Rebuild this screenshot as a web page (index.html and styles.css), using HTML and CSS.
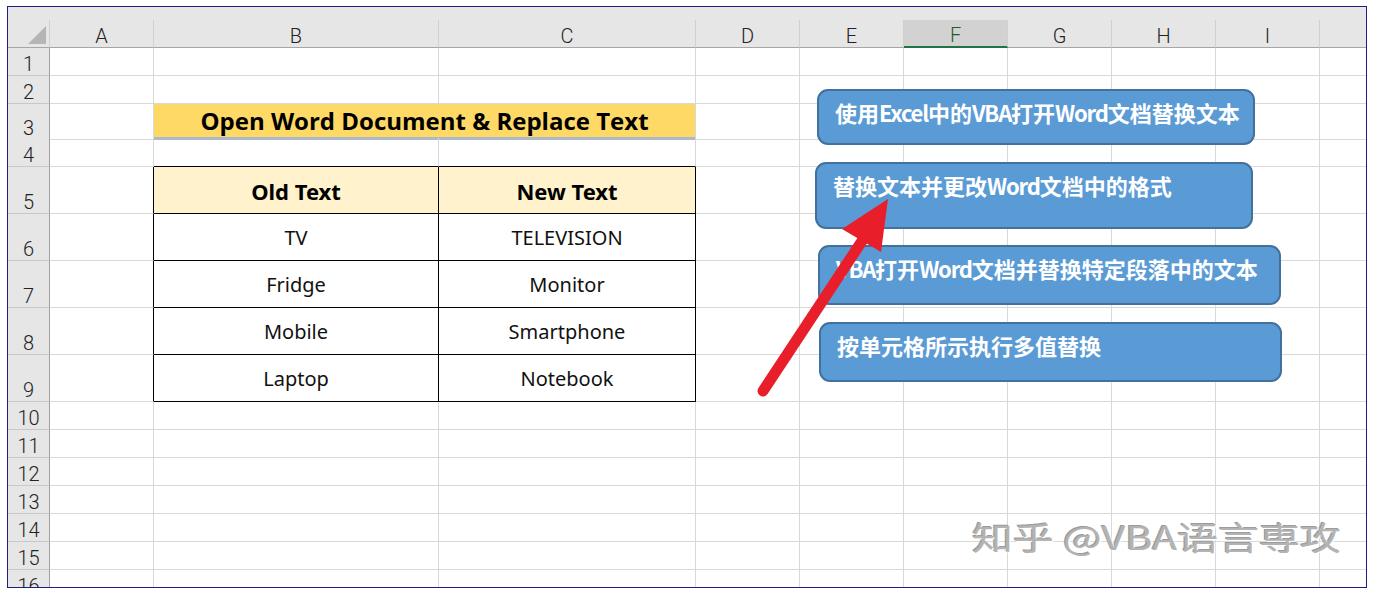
FILE: index.html
```html
<!DOCTYPE html>
<html lang="zh-CN">
<head>
<meta charset="utf-8">
<title>Open Word Document &amp; Replace Text</title>
<link rel="stylesheet" href="styles.css">
</head>
<body>
<div class="frame">
  <div class="row colhead">
    <div class="corner"><svg width="18" height="18" viewBox="0 0 18 18"><polygon points="18,0 18,18 0,18" fill="#b5b5b5"/></svg></div>
    <div>A</div><div>B</div><div>C</div><div>D</div><div>E</div><div class="sel">F</div><div>G</div><div>H</div><div>I</div><div></div>
  </div>
  <div class="row r28"><div class="rh">1</div><div class="c"></div><div class="c"></div><div class="c"></div><div class="c"></div><div class="c"></div><div class="c"></div><div class="c"></div><div class="c"></div><div class="c"></div><div class="c"></div></div>
  <div class="row r28"><div class="rh">2</div><div class="c"></div><div class="c"></div><div class="c"></div><div class="c"></div><div class="c"></div><div class="c"></div><div class="c"></div><div class="c"></div><div class="c"></div><div class="c"></div></div>
  <div class="row r34"><div class="rh">3</div><div class="c"></div><div class="c title">Open Word Document &amp; Replace Text</div><div class="c"></div><div class="c"></div><div class="c"></div><div class="c"></div><div class="c"></div><div class="c"></div><div class="c"></div></div>
  <div class="row r29"><div class="rh">4</div><div class="c"></div><div class="c tt"></div><div class="c tt"></div><div class="c"></div><div class="c"></div><div class="c"></div><div class="c"></div><div class="c"></div><div class="c"></div><div class="c"></div></div>
  <div class="row r47"><div class="rh">5</div><div class="c tl"></div><div class="c tb tbh">Old Text</div><div class="c tb tbh">New Text</div><div class="c"></div><div class="c"></div><div class="c"></div><div class="c"></div><div class="c"></div><div class="c"></div><div class="c"></div></div>
  <div class="row r47"><div class="rh">6</div><div class="c tl"></div><div class="c tb">TV</div><div class="c tb">TELEVISION</div><div class="c"></div><div class="c"></div><div class="c"></div><div class="c"></div><div class="c"></div><div class="c"></div><div class="c"></div></div>
  <div class="row r47"><div class="rh">7</div><div class="c tl"></div><div class="c tb">Fridge</div><div class="c tb">Monitor</div><div class="c"></div><div class="c"></div><div class="c"></div><div class="c"></div><div class="c"></div><div class="c"></div><div class="c"></div></div>
  <div class="row r47"><div class="rh">8</div><div class="c tl"></div><div class="c tb">Mobile</div><div class="c tb">Smartphone</div><div class="c"></div><div class="c"></div><div class="c"></div><div class="c"></div><div class="c"></div><div class="c"></div><div class="c"></div></div>
  <div class="row r47"><div class="rh">9</div><div class="c tl"></div><div class="c tb">Laptop</div><div class="c tb">Notebook</div><div class="c"></div><div class="c"></div><div class="c"></div><div class="c"></div><div class="c"></div><div class="c"></div><div class="c"></div></div>
  <div class="row r28"><div class="rh">10</div><div class="c"></div><div class="c"></div><div class="c"></div><div class="c"></div><div class="c"></div><div class="c"></div><div class="c"></div><div class="c"></div><div class="c"></div><div class="c"></div></div>
  <div class="row r28"><div class="rh">11</div><div class="c"></div><div class="c"></div><div class="c"></div><div class="c"></div><div class="c"></div><div class="c"></div><div class="c"></div><div class="c"></div><div class="c"></div><div class="c"></div></div>
  <div class="row r28"><div class="rh">12</div><div class="c"></div><div class="c"></div><div class="c"></div><div class="c"></div><div class="c"></div><div class="c"></div><div class="c"></div><div class="c"></div><div class="c"></div><div class="c"></div></div>
  <div class="row r28"><div class="rh">13</div><div class="c"></div><div class="c"></div><div class="c"></div><div class="c"></div><div class="c"></div><div class="c"></div><div class="c"></div><div class="c"></div><div class="c"></div><div class="c"></div></div>
  <div class="row r28"><div class="rh">14</div><div class="c"></div><div class="c"></div><div class="c"></div><div class="c"></div><div class="c"></div><div class="c"></div><div class="c"></div><div class="c"></div><div class="c"></div><div class="c"></div></div>
  <div class="row r28"><div class="rh">15</div><div class="c"></div><div class="c"></div><div class="c"></div><div class="c"></div><div class="c"></div><div class="c"></div><div class="c"></div><div class="c"></div><div class="c"></div><div class="c"></div></div>
  <div class="row r28"><div class="rh">16</div><div class="c"></div><div class="c"></div><div class="c"></div><div class="c"></div><div class="c"></div><div class="c"></div><div class="c"></div><div class="c"></div><div class="c"></div><div class="c"></div></div>

  <div class="shape s1">使用<span class="lat">Excel</span>中的<span class="lat">VBA</span>打开<span class="lat">Word</span>文档替换文本</div>
  <div class="shape s2">替换文本并更改<span class="lat">Word</span>文档中的格式</div>
  <div class="shape s3"><span class="lat">VBA</span>打开<span class="lat">Word</span>文档并替换特定段落中的文本</div>
  <div class="shape s4">按单元格所示执行多值替换</div>

  <svg class="arrow" width="1358" height="580" viewBox="8 7 1358 580">
    <line x1="763" y1="391" x2="864" y2="238" stroke="#e81f2a" stroke-width="11" stroke-linecap="round"/>
    <polygon points="888,199 842,229 881,252" fill="#e81f2a"/>
  </svg>

  <div class="mark">知乎 @VBA语言専攻</div>
</div>
</body>
</html>
```

FILE: styles.css
```css
* { box-sizing: border-box; }

body {
  margin: 0;
  background: #ffffff;
  font-family: "Noto Sans", "Noto Sans CJK SC", sans-serif;
}

.frame {
  position: relative;
  margin: 6px 0 0 7px;
  width: 1360px;
  height: 582px;
  border: 1px solid #1f1f7f;
  overflow: hidden;
  background: #ffffff;
}

.row {
  display: grid;
  grid-template-columns: 42px 104px 285px 257px repeat(6, 104px) 46px;
}

.r28 { height: 28px; }
.r29 { height: 29px; }
.r34 { height: 34px; }
.r47 { height: 47px; }

.colhead {
  height: 41px;
  padding-top: 13px;
  background: #e6e6e6;
}

.colhead > div {
  height: 28px;
  border-right: 1px solid #d0d0d0;
  border-bottom: 1px solid #a6a6a6;
  display: flex;
  align-items: flex-end;
  justify-content: center;
  padding-bottom: 1px;
  font: 300 20px/1 Roboto, "Liberation Sans", sans-serif;
  color: #222222;
}

.colhead > .corner {
  justify-content: flex-end;
  padding: 0 3px 3px 0;
}

.colhead > .sel {
  background: #d2d2d2;
  border-bottom: 2px solid #217346;
  color: #1e5c36;
}

.row > :last-child { border-right: 0; }

.rh {
  background: #e6e6e6;
  border-right: 1px solid #a0a0a0;
  border-bottom: 1px solid #c8c8c8;
  display: flex;
  align-items: flex-end;
  justify-content: center;
  padding-bottom: 1px;
  font: 300 20px/1 Roboto, "Liberation Sans", sans-serif;
  color: #222222;
}

.c {
  border-right: 1px solid #d9d9d9;
  border-bottom: 1px solid #d9d9d9;
}

.title {
  grid-column: span 2;
  background: #ffd966;
  border-bottom: 3px solid #adb9ca;
  display: flex;
  align-items: center;
  justify-content: center;
  padding-top: 0;
  font: 700 24px "Open Sans", sans-serif;
  color: #000000;
}

.tt { border-bottom-color: #000000; }
.tl { border-right-color: #000000; }

.tb {
  border-right-color: #000000;
  border-bottom-color: #000000;
  display: flex;
  align-items: center;
  justify-content: center;
  padding-top: 1px;
  font-size: 20px;
  color: #111111;
}

.tbh {
  background: #fff2cc;
  font-weight: 700;
  font-size: 22px;
  color: #000000;
}

.shape {
  position: absolute;
  background: #5b9bd5;
  border: 2px solid #41719c;
  border-radius: 11px;
  color: #ffffff;
  font: 700 22px/1.2 "Noto Sans CJK SC", sans-serif;
  padding: 8px 16px;
  white-space: nowrap;
}

.shape .lat { letter-spacing: -1.2px; }

.s1 { left: 809px; top: 82px; width: 438px; height: 56px; }
.s2 { left: 807px; top: 155px; width: 438px; height: 67px; }
.s3 { left: 810px; top: 238px; width: 463px; height: 60px; }
.s4 { left: 811px; top: 315px; width: 463px; height: 60px; }

.arrow {
  position: absolute;
  left: 0;
  top: 0;
  pointer-events: none;
}

.mark {
  position: absolute;
  left: 964px;
  top: 513px;
  font: 400 32px/1 "Noto Sans CJK SC", sans-serif;
  color: #b3b3b3;
  transform: scaleX(1.28);
  transform-origin: left top;
  text-shadow: 1px 1px 0 #ffffff, -1px -1px 0 #9c9c9c;
  white-space: nowrap;
}
```
